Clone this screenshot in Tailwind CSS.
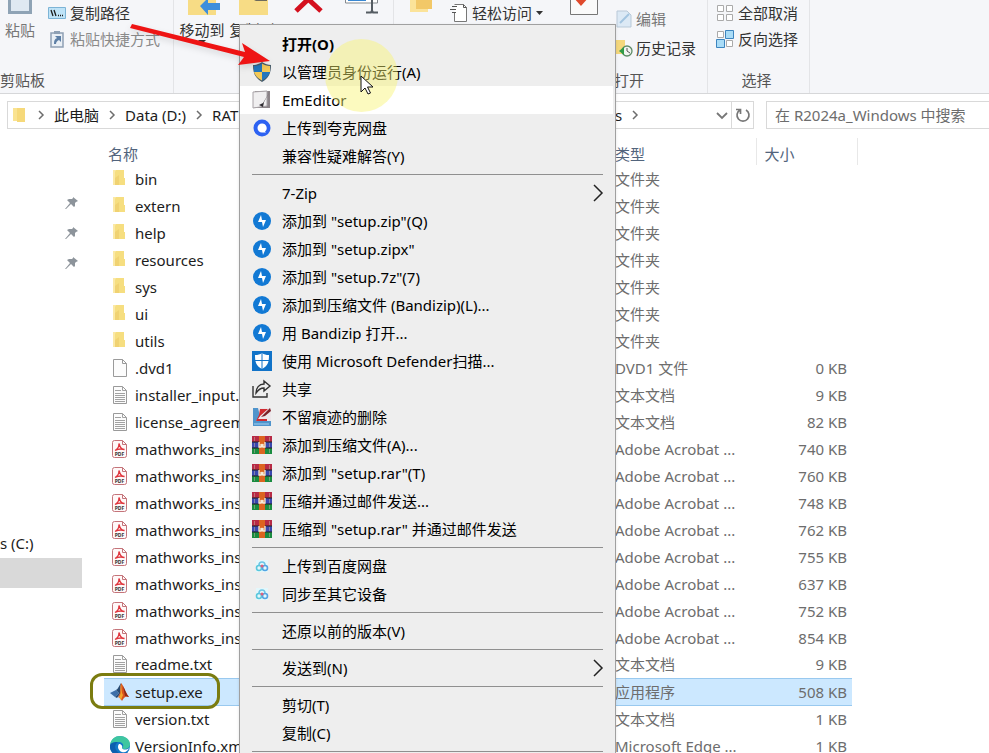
<!DOCTYPE html>
<html lang="zh-CN">
<head>
  <meta charset="UTF-8" />
  <title>R2024a_Windows</title>
  <meta name="viewport" content="width=device-width, initial-scale=1" />
  <script src="https://cdn.jsdelivr.net/npm/@tailwindcss/browser@4"></script>
  <style> body { font-family: 'Noto Sans', 'Noto Sans CJK SC', sans-serif; } </style>
</head>

<body class="relative h-screen overflow-hidden bg-white text-[15px] leading-5 text-[#1c1c1c]">

  <!-- ICONS -->
  <svg class="hidden">
    <symbol id="i-folder" viewBox="0 0 20 20"><path d="M3 1h11v15H3z" fill="#fbe9a6"/><path d="M6 1h8v8h1v7H5V3z" fill="#f6de80"/><path d="M5 9l4-3v10H5z" fill="#f0d272"/></symbol>
    <symbol id="i-file" viewBox="0 0 20 20"><path d="M3.500 1.500h9l4 4v13h-13z" fill="#fcfcfc" stroke="#9a9a9a"/><path d="M12.500 1.500v4h4" fill="none" stroke="#9a9a9a"/></symbol>
    <symbol id="i-txt" viewBox="0 0 20 20"><path d="M3.500 1.500h9l4 4v13h-13z" fill="#fcfcfc" stroke="#9a9a9a"/><path d="M12.500 1.500v4h4M5 5.500h6M5 8.500h10M5 10.500h10M5 12.500h10M5 14.500h10M5 16.500h10" fill="none" stroke="#a2a2a2"/></symbol>
    <symbol id="i-pdf" viewBox="0 0 20 20"><path d="M4.500 1.500h8l4 4v11a2 2 0 0 1-2 2h-10a2 2 0 0 1-2-2v-13a2 2 0 0 1 2-2z" fill="#fff8f8" stroke="#c4747a"/><path d="M12.500 1.500v4h4" fill="none" stroke="#c4747a"/><path d="M5 11.500c2-1 4-4 4-7 1 4 3 6 5.500 6-3-.8-7-.3-9.500 1z" fill="none" stroke="#e0343c" stroke-width="1.300"/><text x="9.500" y="17" text-anchor="middle" font-size="5" font-weight="700" fill="#333">PDF</text></symbol>
    <symbol id="i-matlab" viewBox="0 0 20 20"><path d="M0 11l6-3 3 3-4 4z" fill="#3d6fa8"/><path d="M6 8c2-1 3-4 5-7l-1 11-3 4-2-1 4-4z" fill="#274b73"/><path d="M11 1c2 1 4 9 8 14-3-1-4-1-7 4-1-2-2-3-4-4 3-3 2-9 3-14z" fill="#d9541e"/><path d="M11 2c1 4 0 8 2 11l-2 5-2-3c3-4 1-9 2-13z" fill="#f4a52a"/><path d="M13 4c2 3 3 8 6 11l-4-1z" fill="#8e2a1a"/></symbol>
    <symbol id="i-edge" viewBox="0 0 20 20"><circle cx="10" cy="10" r="10" fill="#1379c8"/><path d="M0 9C1 3 5 0 10 0c6 0 10 4 10 8s-3 5-6 5c-2 0-2-1-1-2 1-3-1-5-5-5-4 0-7 1-8 3z" fill="#3ec6a0"/><path d="M0 9c2-3 5-3 8-3-3 2-4 6-1 9 3 4 8 3 11 1-2 3-5 4-8 4C4 20-1 15 0 9z" fill="#0d5fae"/><path d="M9 8c2 0 4 2 3 4 1 2 5 2 7 0-1 3-4 5-7 4-4-1-5-6-3-8z" fill="#fff"/></symbol>
    <symbol id="i-pin" viewBox="0 0 14 14"><path d="M8 1l5 4-2 1-1 1v3l-1 1-3-3-5 5H0l5-6-3-3 2-1h3l1-1z" fill="#8d949b"/></symbol>

    <symbol id="m-shield" viewBox="0 0 20 20"><path d="M10 0c3 2 6 3 9 3 0 8-2 13-9 17C3 16 1 11 1 3c3 0 6-1 9-3z" fill="#475a68"/><path d="M10 1.500V10H2c0-2-.2-4 0-6 3 0 6-1 8-2.500z" fill="#2477bd"/><path d="M10 1.500C12 3 15 4 18 4v6h-8z" fill="#f3c957"/><path d="M2 10h8v8.500C5 16 3 13 2 10z" fill="#f3c957"/><path d="M10 10h8c-1 3-3 6-8 8.500z" fill="#2477bd"/></symbol>
    <symbol id="m-em" viewBox="0 0 20 20"><path d="M3 1h15v17H2z" fill="#8b8488"/><path d="M1 2l14-1v15L1 18z" fill="#f0eff0" stroke="#a7a2a6"/><path d="M17 3l-5 9-1 5-4-2 4-2z" fill="#2e2b30"/></symbol>
    <symbol id="m-quark" viewBox="0 0 20 20"><circle cx="10" cy="10" r="8.500" fill="#2d62f2"/><path d="M10 5.500a4.500 4.500 0 0 1 3 8l1 1h-4a4.500 4.500 0 0 1 0-9z" fill="#fff"/></symbol>
    <symbol id="m-bandi" viewBox="0 0 20 20"><circle cx="10" cy="10" r="9" fill="#1279d4"/><path d="M9 4L6 11h4l1 5 3-7h-4z" fill="#fff"/></symbol>
    <symbol id="m-defender" viewBox="0 0 20 20"><path d="M0 0h20v20H0z" fill="#1173c8"/><path d="M10 2c2 1.500 4 2 7 2 0 7-1 11-7 14C4 15 3 11 3 4c3 0 5-.5 7-2z" fill="#fff"/><path d="M10 2v16M3 9.500h14" stroke="#1173c8"/></symbol>
    <symbol id="m-share" viewBox="0 0 20 20"><path d="M1 7v11h14v-4" fill="none" stroke="#333" stroke-width="1.400"/><path d="M12 2l6 5-6 5V9c-4 0-6 2-8 5 0-5 3-9 8-9z" fill="none" stroke="#333" stroke-width="1.400"/></symbol>
    <symbol id="m-erase" viewBox="0 0 20 20"><path d="M1 1h18v18H1z" fill="#4f94cc"/><path d="M6 1h13v13H4l4-5z" fill="#ece6ea"/><path d="M8 2h8L8 9l-2 3h9v2H4l3-6z" fill="#d02a30"/><path d="M18 1l1 3-6 5-4 1z" fill="#7c2228"/><path d="M2 17h15" stroke="#79b3df" stroke-width="2"/></symbol>
    <symbol id="m-rar" viewBox="0 0 20 20"><path d="M0 1h20v6H0z" fill="#b72a45"/><path d="M0 7h20v6H0z" fill="#3947ae"/><path d="M0 13h20v6H0z" fill="#1a8c40"/><path d="M0 7h20M0 13h20" stroke="#242424"/><path d="M2.500 2v4M2.500 8v4M2.500 14v4M17.500 2v4M17.500 8v4M17.500 14v4" stroke="#c9b9a5" stroke-width=".5"/><path d="M7 1h6v18H7z" fill="#dc6420"/><path d="M7 7v5h2V9l1 2 1-2v3h2V7" fill="none" stroke="#f5ecd9" stroke-width="1.300"/></symbol>
    <symbol id="m-baidu" viewBox="0 0 20 20"><path d="M4 4h12v12H4z" fill="#e3f7fb"/><circle cx="7" cy="12" r="2.500" fill="none" stroke="#59c7dc" stroke-width="1.600"/><circle cx="13" cy="12" r="2.500" fill="none" stroke="#52a4e4" stroke-width="1.600"/><path d="M7 9a3 3 0 0 1 6 0" fill="none" stroke="#6cc5e6" stroke-width="1.600"/><circle cx="10" cy="10" r="1.500" fill="#e0607c"/></symbol>
  </svg>

  <!-- RIBBON -->
  <header class="flex h-[94px] overflow-hidden border-b border-[#d6d7d9] bg-[#f5f6f9] text-[#333]">
    <section class="flex w-[174px] shrink-0 flex-col justify-between border-r border-[#e3e4e7]">
      <div class="flex gap-3">
        <button class="flex w-9 shrink-0 flex-col items-center gap-1 pl-1 text-[#777]">
          <svg class="h-4 w-7 shrink-0" viewBox="0 0 28 16"><path d="M2 0h24v14H2z" fill="#8fa3b5"/><path d="M5 0h18v11H5z" fill="#dfe9f2"/></svg>
          <span class="whitespace-nowrap">粘贴</span>
        </button>
        <div class="flex flex-col">
          <button class="flex h-[26px] items-center gap-1 whitespace-nowrap">
            <svg class="h-3 w-[18px]" viewBox="0 0 18 12"><path d="M.5.500h17v11H.500z" fill="#bfe3f7" stroke="#7db4d6"/><path d="M3 3l2 6M6 3l2 6M10 8.500h1M12 8.500h1M14 8.500h1" stroke="#1c1c1c" stroke-width="1.300"/></svg>
            复制路径
          </button>
          <button class="flex h-[26px] items-center gap-1 whitespace-nowrap text-[#8a8a8a]">
            <svg class="h-[18px] w-[18px]" viewBox="0 0 18 18"><path d="M3 3h12v14H3z" fill="#e9eff5" stroke="#8ea0b4" stroke-width="1.500"/><path d="M6 1h6v3H6z" fill="#8ea0b4"/><path d="M6 14c0-4 1-5 3-6L7 6h6v6l-2-2c-2 1-3 2-3 4z" fill="#5d7fa6"/></svg>
            粘贴快捷方式
          </button>
        </div>
      </div>
      <h2 class="pb-[3px] text-[#555]">剪贴板</h2>
    </section>
    <section class="flex w-[220px] shrink-0 items-start gap-0.5 border-r border-[#e3e4e7] pl-1">
      <button class="flex w-12 flex-col items-center gap-1">
        <svg class="h-4 w-9" viewBox="0 0 36 16"><path d="M4 0h28v15H4z" fill="#f7dc85"/><path d="M16 6l8-8v5h12v7H24v5z" fill="#3e8edb"/></svg>
        <span class="whitespace-nowrap">移动到</span>
        <svg class="-mt-1 h-1 w-2" viewBox="0 0 8 4"><path d="M0 0h8L4 4z" fill="#333"/></svg>
      </button>
      <button class="flex w-12 flex-col items-center gap-1">
        <svg class="h-4 w-9" viewBox="0 0 36 16"><path d="M5 0h29v15H5z" fill="#f7dc85"/><path d="M20 0h13v1H22z" fill="#6d6a5c"/></svg>
        <span class="whitespace-nowrap">复制到</span>
      </button>
      <button class="flex w-[60px] justify-center" aria-label="删除">
        <svg class="h-4 w-8" viewBox="0 0 32 16"><path d="M2-14L29 11M30-14L4 11" fill="none" stroke="#d4101e" stroke-width="5"/></svg>
      </button>
      <button class="flex w-10 justify-end" aria-label="重命名">
        <svg class="h-4 w-9" viewBox="0 0 36 16"><path d="M1.500-5h32v8h-32z" fill="#fff" stroke="#84898e"/><path d="M4-4h18v5H4z" fill="#3987d2"/><path d="M28-2v14M22 12.500h5l1-2 1 2h5" fill="none" stroke="#555c63" stroke-width="2"/></svg>
      </button>
    </section>
    <section class="flex w-[220px] shrink-0 items-start pl-4">
      <button aria-label="新建文件夹" class="w-10">
        <svg class="h-4 w-6" viewBox="0 0 24 16"><path d="M0 0h18v12H0z" fill="#fbe39a"/><path d="M6 0h16v9H6z" fill="#f2c868"/></svg>
      </button>
      <button class="flex h-[26px] items-center gap-1 whitespace-nowrap">
        <svg class="h-[18px] w-[18px]" viewBox="0 0 18 18"><path d="M4.500.500h9l3 3v14h-12V9" fill="#fff" stroke="#777"/><path d="M13.500.500v3h3M2 2.500h5M0 5.500h6M2 8.500h4" fill="none" stroke="#555"/></svg>
        轻松访问
        <svg class="h-1 w-2" viewBox="0 0 8 4"><path d="M0 0h7L3.500 4z" fill="#333"/></svg>
      </button>
      <button aria-label="属性" class="ml-[26px]">
        <svg class="h-4 w-7" viewBox="0 0 28 16"><path d="M.5-4h27v18.500H.500z" fill="#fafafa" stroke="#777"/><path d="M4-5l7 8 8-9" fill="none" stroke="#e04a2c" stroke-width="4"/></svg>
      </button>
    </section>
    <section class="flex w-[94px] shrink-0 flex-col justify-between border-r border-[#e3e4e7] pt-[9px]">
      <div class="flex flex-col gap-[9px] pl-0.5">
        <button class="flex items-center gap-0.5 whitespace-nowrap text-[#777]">
          <svg class="h-[18px] w-[18px] shrink-0" viewBox="0 0 18 18"><path d="M1 1h10l4 4v12H1z" fill="#dce9f5" stroke="#b9c9d8"/><path d="M4 13l9-9" stroke="#a3c4e0" stroke-width="2"/></svg>
          编辑
        </button>
        <button class="flex items-center gap-0.5 whitespace-nowrap">
          <svg class="h-[18px] w-[18px] shrink-0" viewBox="0 0 18 18"><path d="M0 1h9v14H0z" fill="#f4d77c"/><circle cx="11" cy="12" r="5" fill="#f0f5f0" stroke="#5d8a66" stroke-width="1.300"/><path d="M3 12l5-4v8z" fill="#2f9b47"/><path d="M11 9v3l3 2" fill="none" stroke="#555"/></svg>
          历史记录
        </button>
      </div>
      <h2 class="pb-[3px] text-[#555]">打开</h2>
    </section>
    <section class="flex w-[102px] shrink-0 flex-col justify-between border-r border-[#e3e4e7]">
      <div class="flex flex-col pl-2">
        <button class="flex h-[26px] items-center gap-1 whitespace-nowrap">
          <svg class="h-[18px] w-[18px]" viewBox="0 0 18 18"><path d="M1.500 1.500h6v6h-6zM10.500 1.500h6v6h-6zM1.500 10.500h6v6h-6zM10.500 10.500h6v6h-6z" fill="#fff" stroke="#aaa"/></svg>
          全部取消
        </button>
        <button class="flex h-[26px] items-center gap-1 whitespace-nowrap">
          <svg class="h-[18px] w-[18px]" viewBox="0 0 18 18"><path d="M1.500 1.500h6v6h-6zM10.500 10.500h6v6h-6z" fill="#fff" stroke="#aaa"/><path d="M9.500.500h8v8h-8zM.5 9.500h8v8h-8z" fill="#a9dcf7" stroke="#3d85bf"/></svg>
          反向选择
        </button>
      </div>
      <h2 class="pr-1 pb-[3px] text-center text-[#555]">选择</h2>
    </section>
  </header>

  <!-- ADDRESS BAR -->
  <div class="flex gap-3 pt-[7px] pl-[7px]">
    <div class="flex h-7 w-[747px] shrink-0 items-center border border-[#d9d9d9]">
      <svg class="ml-1 h-5 w-4 shrink-0" viewBox="0 0 16 20"><path d="M1 3h8v13H1z" fill="#fae391"/><path d="M5 3h8v14H5z" fill="#f6d97a"/></svg>
      <nav class="flex min-w-0 grow items-center">
        <svg class="mx-[9px] h-3 w-2 shrink-0" viewBox="0 0 8 12"><path d="M2 2l4 4-4 4" fill="none" stroke="#6d6d6d" stroke-width="1.500"/></svg>
        <a href="#" class="whitespace-nowrap">此电脑</a>
        <svg class="mx-[9px] h-3 w-2 shrink-0" viewBox="0 0 8 12"><path d="M2 2l4 4-4 4" fill="none" stroke="#6d6d6d" stroke-width="1.500"/></svg>
        <a href="#" class="whitespace-nowrap">Data (D:)</a>
        <svg class="mx-[9px] h-3 w-2 shrink-0" viewBox="0 0 8 12"><path d="M2 2l4 4-4 4" fill="none" stroke="#6d6d6d" stroke-width="1.500"/></svg>
        <a href="#" class="w-[280px] shrink-0 whitespace-nowrap">RAT</a>
        <a href="#" class="w-[130px] shrink-0 text-right whitespace-nowrap">R2024a_Windows</a>
        <svg class="mx-[9px] h-3 w-2 shrink-0" viewBox="0 0 8 12"><path d="M2 2l4 4-4 4" fill="none" stroke="#6d6d6d" stroke-width="1.500"/></svg>
      </nav>
      <button aria-label="以前的位置" class="px-[3px]"><svg class="h-3 w-3" viewBox="0 0 12 12"><path d="M1 4l5 5 5-5" fill="none" stroke="#777" stroke-width="1.800"/></svg></button>
      <button aria-label="刷新" class="flex h-full w-[22px] items-center justify-center border-l border-[#d9d9d9]">
        <svg class="h-4 w-4" viewBox="0 0 16 16"><path d="M11 3a6 6 0 1 1-6 0M1 2.500h4.500V7" fill="none" stroke="#777" stroke-width="1.700"/></svg>
      </button>
    </div>
    <input type="search" aria-label="搜索" placeholder="在 R2024a_Windows 中搜索" class="h-7 min-w-0 grow border border-r-0 border-[#d9d9d9] px-2 placeholder:text-[#6d6d6d]" />
  </div>

  <!-- MAIN -->
  <main class="flex pt-[9px]">
    <nav class="w-[104px] shrink-0 pt-[50px]">
      <ul class="pl-[65px]">
        <li class="flex h-[30px] items-center"><svg class="h-3.5 w-3.5"><use href="#i-pin"/></svg></li>
        <li class="flex h-[30px] items-center"><svg class="h-3.5 w-3.5"><use href="#i-pin"/></svg></li>
        <li class="flex h-[30px] items-center"><svg class="h-3.5 w-3.5"><use href="#i-pin"/></svg></li>
      </ul>
      <a href="#" class="mt-[250px] flex h-[30px] items-center">s (C:)</a>
      <a href="#" aria-label="Data (D:)" class="block h-[30px] w-[82px] bg-[#d9d9d9]"></a>
    </nav>
    <table class="w-[753px] shrink-0 table-fixed border-collapse">
      <colgroup><col class="w-[503px]" /><col class="w-[149px]" /><col class="w-24" /><col class="w-[5px]" /></colgroup>
      <thead>
        <tr class="h-[27px] text-left text-[#52647c]">
          <th class="p-0 pt-1 pl-1 font-normal">名称</th>
          <th class="border-r border-[#e8e8e8] p-0 pt-1 pl-2 font-normal">类型</th>
          <th class="p-0 pt-1 pl-2 font-normal">大小</th>
          <th class="border-r border-[#e8e8e8] p-0"></th>
        </tr>
      </thead>
      <tbody id="fileList"></tbody>
    </table>
  </main>

  <!-- CONTEXT MENU -->
  <div id="contextMenu" role="menu" class="absolute top-6 left-[239px] w-[377px] border border-[#a0a0a0] bg-[#eeeeee] pt-[5px] pr-[2px] text-black shadow-sm"></div>

  <!-- POINTER + MARKS -->
  <div class="pointer-events-none absolute top-[39px] left-[325px] h-[73px] w-[73px] rounded-full bg-[#f8f470]/45"></div>
  <svg class="pointer-events-none absolute top-[75px] left-[359px] h-5 w-4" viewBox="0 0 16 20"><path d="M2 1v16l4-4 3 6 2.500-1-3-6H14z" fill="#fff" stroke="#111"/></svg>
  <svg class="pointer-events-none absolute top-4 left-[124px] h-14 w-[152px] drop-shadow-md" viewBox="0 0 152 56"><path d="M8 8l113 28-3-9 28 18-32 4 6-8L6 12z" fill="#ee1414"/></svg>
  <div class="pointer-events-none absolute top-[673px] left-[90px] h-9 w-[130px] rounded-xl border-3 border-[#7b7c10]"></div>

  <script>
    const pdf = size => ({ icon: 'i-pdf', name: 'mathworks_installer', type: 'Adobe Acrobat ...', size });
    const files = [
      ...['bin', 'extern', 'help', 'resources', 'sys', 'ui', 'utils'].map(name => ({ icon: 'i-folder', name, type: '文件夹', size: '' })),
      { icon: 'i-file', name: '.dvd1', type: 'DVD1 文件', size: '0 KB' },
      { icon: 'i-txt', name: 'installer_input.txt', type: '文本文档', size: '9 KB' },
      { icon: 'i-txt', name: 'license_agreement.txt', type: '文本文档', size: '82 KB' },
      ...['740 KB', '760 KB', '748 KB', '762 KB', '755 KB', '637 KB', '752 KB', '854 KB'].map(pdf),
      { icon: 'i-txt', name: 'readme.txt', type: '文本文档', size: '9 KB' },
      { icon: 'i-matlab', name: 'setup.exe', type: '应用程序', size: '508 KB', selected: true },
      { icon: 'i-txt', name: 'version.txt', type: '文本文档', size: '1 KB' },
      { icon: 'i-edge', name: 'VersionInfo.xml', type: 'Microsoft Edge ...', size: '1 KB' }
    ];

    document.getElementById('fileList').innerHTML = files.map(f => {
      const cell = f.selected ? 'bg-[#cce8ff] border-y border-[#99c9ef]' : '';
      return `<tr class="h-[27px]">
        <td class="${cell} p-0 pl-[6px]"><div class="flex items-center gap-[5px]"><svg class="h-5 w-5 shrink-0"><use href="#${f.icon}"/></svg>${f.name}</div></td>
        <td class="${cell} whitespace-nowrap p-0 pl-2 text-[#6d6d6d]">${f.type}</td>
        <td class="${cell} p-0 pr-[5px] text-right text-[#6d6d6d]">${f.size}</td>
        <td class="p-0"></td>
      </tr>`;
    }).join('');

    // null = separator
    const menu = [
      { text: '打开(O)', bold: true },
      { text: '以管理员身份运行(A)', icon: 'm-shield' },
      { text: 'EmEditor', icon: 'm-em', active: true },
      { text: '上传到夸克网盘', icon: 'm-quark' },
      { text: '兼容性疑难解答(Y)' },
      null,
      { text: '7-Zip', sub: true },
      { text: '添加到 "setup.zip"(Q)', icon: 'm-bandi' },
      { text: '添加到 "setup.zipx"', icon: 'm-bandi' },
      { text: '添加到 "setup.7z"(7)', icon: 'm-bandi' },
      { text: '添加到压缩文件 (Bandizip)(L)...', icon: 'm-bandi' },
      { text: '用 Bandizip 打开...', icon: 'm-bandi' },
      { text: '使用 Microsoft Defender扫描...', icon: 'm-defender' },
      { text: '共享', icon: 'm-share' },
      { text: '不留痕迹的删除', icon: 'm-erase' },
      { text: '添加到压缩文件(A)...', icon: 'm-rar' },
      { text: '添加到 "setup.rar"(T)', icon: 'm-rar' },
      { text: '压缩并通过邮件发送...', icon: 'm-rar' },
      { text: '压缩到 "setup.rar" 并通过邮件发送', icon: 'm-rar' },
      null,
      { text: '上传到百度网盘', icon: 'm-baidu' },
      { text: '同步至其它设备', icon: 'm-baidu' },
      null,
      { text: '还原以前的版本(V)' },
      null,
      { text: '发送到(N)', sub: true },
      null,
      { text: '剪切(T)' },
      { text: '复制(C)' },
      null
    ];

    document.getElementById('contextMenu').innerHTML = menu.map(m => {
      if (!m) return '<div role="separator" class="flex h-[9px] items-center pr-[10px] pl-3"><div class="h-px w-full bg-[#8f8f8f]"></div></div>';
      const icon = m.icon ? `<svg class="h-5 w-5"><use href="#${m.icon}"/></svg>` : '';
      const arrow = m.sub ? '<svg class="ml-auto h-5 w-3" viewBox="0 0 12 20"><path d="M2 2l8 8-8 8" fill="none" stroke="#222" stroke-width="1.500"/></svg>' : '';
      return `<button role="menuitem" class="flex h-7 w-full items-center gap-[10px] pr-[9px] pl-3 ${m.active ? 'bg-white' : 'hover:bg-white'} ${m.bold ? 'font-bold' : ''}">
        <span class="h-5 w-5 shrink-0">${icon}</span><span class="whitespace-nowrap">${m.text}</span>${arrow}
      </button>`;
    }).join('');
  </script>
</body>
</html>
